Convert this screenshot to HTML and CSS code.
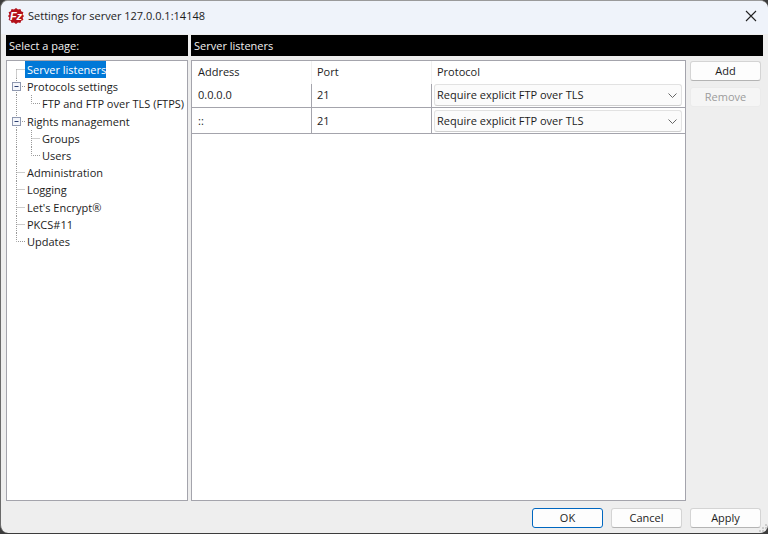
FILE: index.html
```html
<!DOCTYPE html>
<html lang="en">
<head>
<meta charset="utf-8">
<title>Settings for server 127.0.0.1:14148</title>
<link rel="stylesheet" href="styles.css">
</head>
<body>
<div class="window">
  <header class="titlebar">
    <svg class="logo" width="16" height="16" viewBox="0 0 16 16">
      <polygon fill="#b3111a" points="8,0 10,1.6 12.4,1 13.2,3.2 15.4,4.2 14.6,6.4 16,8 14.6,9.8 15.4,12 13.2,12.8 12.4,15 10,14.4 8,16 6,14.4 3.6,15 2.8,12.8 .6,12 1.4,9.8 0,8 1.4,6.4 .6,4.2 2.8,3.2 3.6,1 6,1.6"/>
      <text x="8" y="12" text-anchor="middle" class="logo-text">Fz</text>
    </svg>
    <span class="title">Settings for server 127.0.0.1:14148</span>
    <svg class="close" width="12" height="12" viewBox="0 0 12 12"><path d="M1 1l10 10M11 1L1 11" stroke="#222" stroke-width="1.1" fill="none"/></svg>
  </header>
  <main class="content">
    <section class="left">
      <div class="band">Select a page:</div>
      <div class="tree">
        <div class="row"><svg class="gut g0" viewBox="0 0 19 17"><path d="M9.5 8.5V17M9.5 8.5H18" class="dots"/></svg><span class="lbl sel">Server listeners</span></div>
        <div class="row"><svg class="gut g0" viewBox="0 0 19 17"><path d="M9.5 0V17M13 8.5H18" class="dots"/><rect x="5.5" y="4.5" width="8" height="8" class="box"/><path d="M7.5 8.5h4" class="minus"/></svg><span class="lbl">Protocols settings</span></div>
        <div class="row"><svg class="gut g1" viewBox="0 0 34 17"><path d="M9.5 0V17M24.5 0V8.5H33" class="dots"/></svg><span class="lbl">FTP and FTP over TLS (FTPS)</span></div>
        <div class="row"><svg class="gut g0" viewBox="0 0 19 17"><path d="M9.5 0V17M13 8.5H18" class="dots"/><rect x="5.5" y="4.5" width="8" height="8" class="box"/><path d="M7.5 8.5h4" class="minus"/></svg><span class="lbl">Rights management</span></div>
        <div class="row"><svg class="gut g1" viewBox="0 0 34 17"><path d="M9.5 0V17M24.5 0V17M24.5 8.5H33" class="dots"/></svg><span class="lbl">Groups</span></div>
        <div class="row"><svg class="gut g1" viewBox="0 0 34 17"><path d="M9.5 0V17M24.5 0V8.5H33" class="dots"/></svg><span class="lbl">Users</span></div>
        <div class="row"><svg class="gut g0" viewBox="0 0 19 17"><path d="M9.5 0V17M9.5 8.5H18" class="dots"/></svg><span class="lbl">Administration</span></div>
        <div class="row"><svg class="gut g0" viewBox="0 0 19 17"><path d="M9.5 0V17M9.5 8.5H18" class="dots"/></svg><span class="lbl">Logging</span></div>
        <div class="row"><svg class="gut g0" viewBox="0 0 19 17"><path d="M9.5 0V17M9.5 8.5H18" class="dots"/></svg><span class="lbl">Let's Encrypt®</span></div>
        <div class="row"><svg class="gut g0" viewBox="0 0 19 17"><path d="M9.5 0V17M9.5 8.5H18" class="dots"/></svg><span class="lbl">PKCS#11</span></div>
        <div class="row"><svg class="gut g0" viewBox="0 0 19 17"><path d="M9.5 0V8.5H18" class="dots"/></svg><span class="lbl">Updates</span></div>
      </div>
    </section>
    <section class="right">
      <div class="band">Server listeners</div>
      <div class="panel">
        <div class="table">
          <div class="thead">
            <div class="th c1">Address</div>
            <div class="th c2">Port</div>
            <div class="th c3">Protocol</div>
          </div>
          <div class="tr tr-a">
            <div class="td c1">0.0.0.0</div>
            <div class="td c2">21</div>
            <div class="td c3"><div class="combo"><span>Require explicit FTP over TLS</span><svg width="9" height="5" viewBox="0 0 9 5"><path d="M.5.5l4 4 4-4" class="chev"/></svg></div></div>
          </div>
          <div class="tr tr-b">
            <div class="td c1">::</div>
            <div class="td c2">21</div>
            <div class="td c3"><div class="combo"><span>Require explicit FTP over TLS</span><svg width="9" height="5" viewBox="0 0 9 5"><path d="M.5.5l4 4 4-4" class="chev"/></svg></div></div>
          </div>
        </div>
        <div class="side">
          <button class="btn">Add</button>
          <button class="btn off">Remove</button>
        </div>
      </div>
    </section>
  </main>
  <footer class="actions">
    <button class="btn primary">OK</button>
    <button class="btn">Cancel</button>
    <button class="btn">Apply</button>
  </footer>
  <svg class="grip" width="10" height="10" viewBox="0 0 10 10"><path d="M7 1h2v2H7zM4 4h2v2H4zM7 4h2v2H7zM1 7h2v2H1zM4 7h2v2H4zM7 7h2v2H7z" fill="#cccccc"/></svg>
</div>
</body>
</html>
```
FILE: styles.css
```css
* { box-sizing: border-box; }
html, body { margin: 0; height: 100%; background: #3c3c3c; overflow: hidden; }
body { font-family: "Open Sans", "Noto Sans", sans-serif; font-size: 11px; color: #1c1c1c; }
.window {
  position: relative;
  width: 768px; height: 533px;
  background: #eeeeee;
  border-radius: 8px;
  border-top: 1px solid #9a9a9a;
  border-left: 1px solid #6a6a6a;
  overflow: hidden;
  display: flex; flex-direction: column;
}
.titlebar {
  height: 33px; flex: none;
  background: #eff3fa;
  display: flex; align-items: center;
  padding: 0 11px 4px 7px;
}
.logo { flex: none; }
.logo-text { font: italic bold 11px "Liberation Sans", sans-serif; fill: #fff; }
.title { margin-left: 4px; flex: 1; }
.content {
  flex: 1; min-height: 0;
  display: flex; gap: 3px;
  padding: 1px 5px 0 5px;
}
.left { width: 182px; flex: none; display: flex; flex-direction: column; gap: 4px; }
.right { flex: 1; display: flex; flex-direction: column; gap: 4px; min-width: 0; }
.band {
  height: 21px; flex: none;
  background: #000; color: #f0f0f0;
  padding: 0 3px; line-height: 21px;
}
.tree {
  flex: 1; background: #fff;
  border: 1px solid #a4a4ac;
}
.row { height: 17.2px; display: flex; align-items: center; white-space: nowrap; }
.gut { height: 17px; flex: none; display: block; }
.g0 { width: 19px; }
.g1 { width: 34px; }
.dots { stroke: #9a9a9a; stroke-width: 1; stroke-dasharray: 1 1; fill: none; }
.box { fill: #f4f6fb; stroke: #8e98b0; stroke-width: 1; }
.minus { stroke: #2c3f70; stroke-width: 1; fill: none; }
.lbl { height: 17px; line-height: 17px; margin-left: -1px; padding-left: 2px; }
.sel { background: #0078d7; color: #fff; }
.panel { flex: 1; display: flex; gap: 4px; min-height: 0; }
.table {
  width: 495px; flex: none;
  background: #fff; border: 1px solid #a4a4ac;
}
.thead { display: flex; height: 23px; }
.th { line-height: 22px; padding-left: 5px; border-right: 1px solid #f0f0f0; }
.thead .c3 { border-right: 0; }
.th.c1, .td.c1 { padding-left: 6px; }
.c1 { width: 120px; flex: none; }
.c2 { width: 120px; flex: none; }
.c3 { flex: 1; min-width: 0; }
.tr { display: flex; border-bottom: 1px solid #a4a4ac; }
.tr-a { height: 24px; }
.tr-b { height: 26px; }
.td { padding-left: 5px; border-right: 1px solid #a4a4ac; }
.tr-a .td { line-height: 22px; }
.tr-b .td { line-height: 25px; }
.td.c3 { border-right: 0; padding: 0 3px 0 2px; }
.tr-b .td.c3 { padding-top: 2px; }
.combo {
  height: 22px;
  background: #fbfbfb;
  border: 1px solid #e2e2e2; border-bottom-color: #cfcfcf;
  border-radius: 3px;
  display: flex; align-items: center; justify-content: space-between;
  padding: 0 4px 0 2px;
}
.combo span { line-height: 20px; }
.chev { stroke: #666; stroke-width: 1; fill: none; }
.side { flex: 1; display: flex; flex-direction: column; gap: 6px; padding-top: 1px; }
.btn {
  width: 71px; height: 20px; padding: 0 0 1px;
  font: inherit; color: #1c1c1c;
  background: #fdfdfd;
  border: 1px solid #d4d4d4; border-bottom-color: #b4b4b4;
  border-radius: 3px;
}
.off { background: #f5f5f5; border-color: #ebebeb; color: #9c9c9c; }
.primary { border: 1px solid #0067c0; }
.actions {
  height: 32px; flex: none;
  display: flex; justify-content: flex-end; gap: 8px;
  padding: 7px 7px 0 0;
}
.grip { position: absolute; right: 0; bottom: 0; }
```
